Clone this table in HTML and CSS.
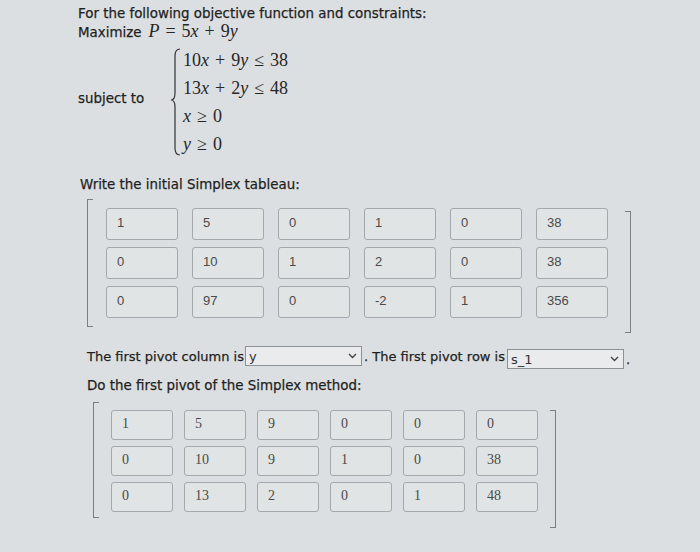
FILE: index.html
```html
<!DOCTYPE html>
<html>
<head>
<meta charset="utf-8">
<link rel="stylesheet" href="styles.css">
</head>
<body>
<div class="page">
  <p class="txt title">For the following objective function and constraints:</p>
  <div class="maxline"><span class="txt">Maximize</span><span class="math"><i>P</i><span class="rel">=</span>5<i>x</i><span class="bin">+</span>9<i>y</i></span></div>
  <div class="subject">
    <span class="txt label">subject to</span>
    <svg class="brace" width="12" height="108" viewBox="0 0 12 108">
      <path d="M10,1 Q5,1 5,8 L5,45 Q5,52 1,52 Q5,52 5,59 L5,100 Q5,107 10,107" fill="none" stroke="#333" stroke-width="1.2"/>
    </svg>
    <div class="system math">
      <div>10<i>x</i><span class="bin">+</span>9<i>y</i><span class="rel">≤</span>38</div>
      <div>13<i>x</i><span class="bin">+</span>2<i>y</i><span class="rel">≤</span>48</div>
      <div><i>x</i><span class="rel">≥</span>0</div>
      <div><i>y</i><span class="rel">≥</span>0</div>
    </div>
  </div>
  <p class="txt write">Write the initial Simplex tableau:</p>
  <div class="matrix m1">
    <div class="bracket left"></div>
    <div class="cells">
      <div class="cell">1</div><div class="cell">5</div><div class="cell">0</div><div class="cell">1</div><div class="cell">0</div><div class="cell">38</div>
      <div class="cell">0</div><div class="cell">10</div><div class="cell">1</div><div class="cell">2</div><div class="cell">0</div><div class="cell">38</div>
      <div class="cell">0</div><div class="cell">97</div><div class="cell">0</div><div class="cell">-2</div><div class="cell">1</div><div class="cell">356</div>
    </div>
    <div class="bracket right"></div>
  </div>
  <div class="txt pivotline">
    <span>The first pivot column is</span>
    <div class="sel"><span>y</span><svg width="9" height="6" viewBox="0 0 9 6"><path d="M1,1 L4.5,4.5 L8,1" fill="none" stroke="#444" stroke-width="1.4"/></svg></div>
    <span>. The first pivot row is</span>
    <div class="sel sel2"><span>s_1</span><svg width="9" height="6" viewBox="0 0 9 6"><path d="M1,1 L4.5,4.5 L8,1" fill="none" stroke="#444" stroke-width="1.4"/></svg></div>
    <span class="dot">.</span>
  </div>
  <p class="txt dofirst">Do the first pivot of the Simplex method:</p>
  <div class="matrix m2">
    <div class="bracket left"></div>
    <div class="cells">
      <div class="cell">1</div><div class="cell">5</div><div class="cell">9</div><div class="cell">0</div><div class="cell">0</div><div class="cell">0</div>
      <div class="cell">0</div><div class="cell">10</div><div class="cell">9</div><div class="cell">1</div><div class="cell">0</div><div class="cell">38</div>
      <div class="cell">0</div><div class="cell">13</div><div class="cell">2</div><div class="cell">0</div><div class="cell">1</div><div class="cell">48</div>
    </div>
    <div class="bracket right"></div>
  </div>
</div>
</body>
</html>
```

FILE: styles.css
```css
html, body {
  margin: 0;
  padding: 0;
  background: #dcdfe1;
}
body {
  width: 700px;
  height: 552px;
  overflow: hidden;
}
.page {
  display: flex;
  flex-direction: column;
  padding: 7px 0 0 78px;
}
.txt {
  font-family: "DejaVu Sans", Verdana, sans-serif;
  font-size: 13.4px;
  color: #1f1f1f;
  -webkit-text-stroke: 0.25px #1f1f1f;
  margin: 0;
}
.title {
  line-height: 14px;
}
.maxline {
  line-height: 17px;
  height: 17px;
  margin-top: 2px;
  display: flex;
  align-items: baseline;
  gap: 7px;
}
.math {
  font-family: "Liberation Serif", "DejaVu Serif", serif;
  font-size: 18px;
  color: #262626;
  white-space: nowrap;
}
.math i {
  font-style: italic;
}
.rel {
  display: inline-block;
  padding: 0 6px;
}
.bin {
  display: inline-block;
  padding: 0 6px;
}
.subject {
  display: flex;
  align-items: center;
  margin-top: 7px;
  height: 110px;
}
.label {
  width: 92px;
  padding-bottom: 8px;
}
.brace {
  margin-right: 1px;
}
.system div {
  line-height: 28px;
  height: 28px;
}
.write {
  margin-top: 20px;
  margin-left: 2px;
  line-height: 15px;
}
.matrix {
  display: flex;
  align-items: stretch;
}
.m1 {
  margin-left: 9px;
  margin-top: 7px;
}
.bracket {
  width: 5px;
  border: 1.5px solid #7a7f83;
}
.bracket.left {
  border-right: none;
}
.bracket.right {
  border-left: none;
}
.cells {
  display: grid;
}
.m1 .cells {
  grid-template-columns: repeat(6, 72px);
  column-gap: 14px;
  row-gap: 7px;
  padding: 9px 13px 9px 13px;
}
.m1 .bracket.right {
  margin-left: 4px;
  margin-top: 12px;
  margin-bottom: -6px;
}
.cell {
  border: 1.5px solid #a3a8ab;
  border-radius: 3px;
  background: #e1e4e5;
  color: #4a4a4a;
  box-sizing: border-box;
  display: flex;
  align-items: center;
}
.m1 .cell {
  height: 32px;
  padding: 0 0 3px 10px;
  font-family: "Liberation Sans", Arial, sans-serif;
  font-size: 13px;
}
.pivotline {
  display: flex;
  align-items: center;
  margin-top: 18px;
  margin-left: 9px;
  height: 22px;
  font-size: 13px;
}
.sel {
  width: 117px;
  height: 20px;
  box-sizing: border-box;
  border: 1px solid #8c9196;
  background: #e9ebec;
  display: flex;
  align-items: center;
  justify-content: space-between;
  padding: 0 4px 0 3px;
  margin: 0 2px 0 1px;
  font-family: "DejaVu Sans", Verdana, sans-serif;
  font-size: 13px;
  color: #333;
  -webkit-text-stroke: 0;
}
.sel2 {
  margin-top: 6px;
  margin-left: 2px;
}
.dot {
  margin-top: 6px;
}
.dofirst {
  margin-top: 11px;
  margin-left: 9px;
  line-height: 15px;
}
.m2 {
  margin-left: 15px;
  margin-top: 9px;
}
.m2 .cells {
  grid-template-columns: repeat(6, 62px);
  column-gap: 11px;
  row-gap: 6px;
  padding: 8px 11px 6px 12px;
}
.m2 .bracket.right {
  margin-left: 1px;
  margin-top: 8px;
  margin-bottom: -10px;
}
.m2 .cell {
  height: 30px;
  padding: 0 0 2px 10px;
  font-family: "Liberation Serif", "DejaVu Serif", serif;
  font-size: 14px;
}
```
